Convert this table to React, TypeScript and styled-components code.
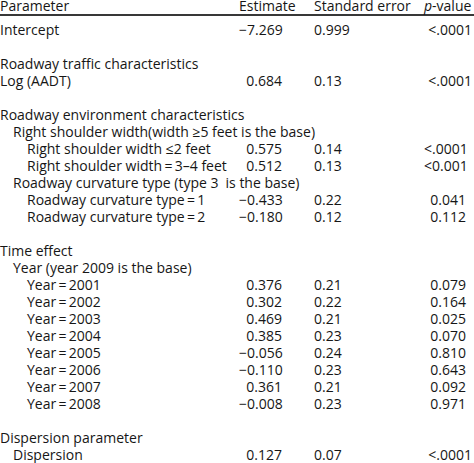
import React from "react";
import styled, { createGlobalStyle } from "styled-components";

const Global = createGlobalStyle`
  html, body { margin: 0; padding: 0; background: #ffffff; }
  body { overflow: hidden; }
`;

const Page = styled.div`
  width: 474px;
  height: 463px;
  overflow: hidden;
  font-family: "Open Sans", "Noto Sans", sans-serif;
  font-size: 14px;
  color: #161616;
`;

const Head = styled.div`
  display: grid;
  grid-template-columns: 239px 75px 110px 50px;
  height: 17px;
  line-height: 17px;
  margin-top: -3px;
  border-bottom: 2px solid #383838;
  white-space: nowrap;
`;

const Body = styled.div`
  padding-top: 5px;
  display: flex;
  flex-direction: column;
`;

const Row = styled.div`
  display: grid;
  grid-template-columns: 239px 75px 110px 50px;
  height: 17px;
  line-height: 17px;
  white-space: nowrap;
`;

const Label = styled.div<{ $indent: number; $span?: boolean }>`
  padding-left: ${(p) => [0, 13, 27][p.$indent]}px;
  grid-column: ${(p) => (p.$span ? "1 / -1" : "auto")};
`;

const Est = styled.div`
  text-align: right;
  padding-right: 32px;
`;

const SE = styled.div`
  text-align: left;
`;

const PVal = styled.div<{ $wide?: boolean }>`
  text-align: right;
  padding-right: ${(p) => (p.$wide ? 2 : 8)}px;
`;

const Italic = styled.i`
  font-style: italic;
`;

type Item =
  | { kind: "blank" }
  | { kind: "group"; label: string; indent: number }
  | { kind: "data"; label: string; indent: number; est: string; se: string; p: string; wide?: boolean };

const M = "\u2212";
const T = "\u2009";

const rows: Item[] = [
  { kind: "data", label: "Intercept", indent: 0, est: `${M}7.269`, se: "0.999", p: "<.0001", wide: true },
  { kind: "blank" },
  { kind: "group", label: "Roadway traffic characteristics", indent: 0 },
  { kind: "data", label: "Log (AADT)", indent: 0, est: "0.684", se: "0.13", p: "<.0001", wide: true },
  { kind: "blank" },
  { kind: "group", label: "Roadway environment characteristics", indent: 0 },
  { kind: "group", label: "Right shoulder width(width \u22655 feet is the base)", indent: 1 },
  { kind: "data", label: "Right shoulder width \u22642 feet", indent: 2, est: "0.575", se: "0.14", p: "<.0001" },
  { kind: "data", label: `Right shoulder width${T}=${T}3\u20134 feet`, indent: 2, est: "0.512", se: "0.13", p: "<0.001" },
  { kind: "group", label: "Roadway curvature type (type 3\u2002is the base)", indent: 1 },
  { kind: "data", label: `Roadway curvature type${T}=${T}1`, indent: 2, est: `${M}0.433`, se: "0.22", p: "0.041" },
  { kind: "data", label: `Roadway curvature type${T}=${T}2`, indent: 2, est: `${M}0.180`, se: "0.12", p: "0.112" },
  { kind: "blank" },
  { kind: "group", label: "Time effect", indent: 0 },
  { kind: "group", label: "Year (year 2009 is the base)", indent: 1 },
  { kind: "data", label: `Year${T}=${T}2001`, indent: 2, est: "0.376", se: "0.21", p: "0.079" },
  { kind: "data", label: `Year${T}=${T}2002`, indent: 2, est: "0.302", se: "0.22", p: "0.164" },
  { kind: "data", label: `Year${T}=${T}2003`, indent: 2, est: "0.469", se: "0.21", p: "0.025" },
  { kind: "data", label: `Year${T}=${T}2004`, indent: 2, est: "0.385", se: "0.23", p: "0.070" },
  { kind: "data", label: `Year${T}=${T}2005`, indent: 2, est: `${M}0.056`, se: "0.24", p: "0.810" },
  { kind: "data", label: `Year${T}=${T}2006`, indent: 2, est: `${M}0.110`, se: "0.23", p: "0.643" },
  { kind: "data", label: `Year${T}=${T}2007`, indent: 2, est: "0.361", se: "0.21", p: "0.092" },
  { kind: "data", label: `Year${T}=${T}2008`, indent: 2, est: `${M}0.008`, se: "0.23", p: "0.971" },
  { kind: "blank" },
  { kind: "group", label: "Dispersion parameter", indent: 0 },
  { kind: "data", label: "Dispersion", indent: 1, est: "0.127", se: "0.07", p: "<.0001", wide: true },
];

export default function App() {
  return (
    <Page>
      <Global />
      <Head>
        <div>Parameter</div>
        <div>Estimate</div>
        <div>Standard error</div>
        <div>
          <Italic>p</Italic>-value
        </div>
      </Head>
      <Body>
        {rows.map((r, i) => {
          if (r.kind === "blank") return <Row key={i} />;
          if (r.kind === "group")
            return (
              <Row key={i}>
                <Label $indent={r.indent} $span>
                  {r.label}
                </Label>
              </Row>
            );
          return (
            <Row key={i}>
              <Label $indent={r.indent}>{r.label}</Label>
              <Est>{r.est}</Est>
              <SE>{r.se}</SE>
              <PVal $wide={r.wide}>{r.p}</PVal>
            </Row>
          );
        })}
      </Body>
    </Page>
  );
}
